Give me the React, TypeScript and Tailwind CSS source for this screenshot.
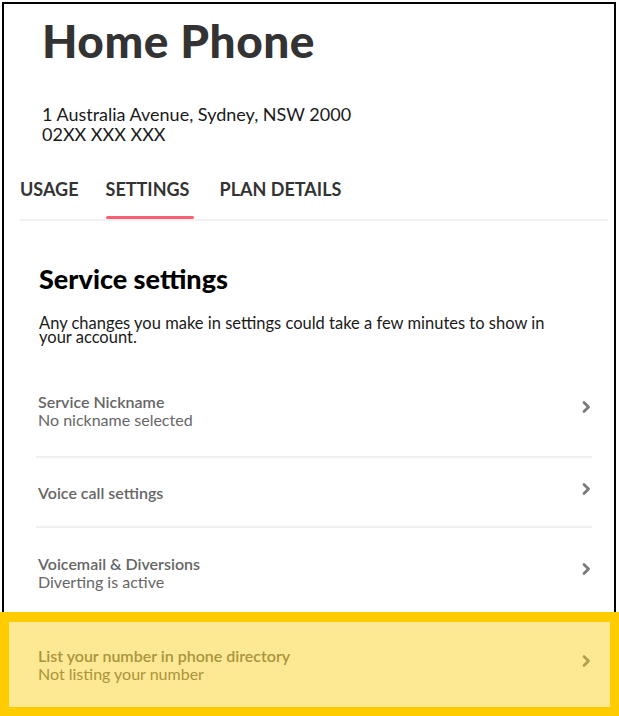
import React from 'react';

const font = { fontFamily: 'Lato, "Liberation Sans", sans-serif' };

const Chevron: React.FC = () => (
  <svg width="10" height="14" viewBox="0 0 10 14" className="mb-[8px] shrink-0">
    <path d="M3 2.5 L7.5 7 L3 11.5" fill="none" stroke="#7a7a7a" strokeWidth="2.8" strokeLinecap="round" strokeLinejoin="round" />
  </svg>
);

interface ItemProps {
  title: string;
  subtitle?: string;
  last?: boolean;
}

const SettingItem: React.FC<ItemProps> = ({ title, subtitle, last }) => (
  <div className={`flex items-center justify-between pl-[2px] pr-[1px] ${subtitle ? 'py-[27px]' : 'pt-[24px] pb-[22px]'} ${last ? '' : 'border-b-2 border-[#efefef]'}`}>
    <div className="text-[16px] leading-[18px] text-[#666666]">
      <div className="font-semibold">{title}</div>
      {subtitle && <div>{subtitle}</div>}
    </div>
    <Chevron />
  </div>
);

export default function App() {
  const tabs = ['USAGE', 'SETTINGS', 'PLAN DETAILS'];
  return (
    <div className="relative w-[619px] h-[716px] overflow-hidden bg-white pl-[2px] pt-[2px]" style={font}>
      <div className="w-[614px] min-h-[714px] border-2 border-b-0 border-black">
        <div className="pl-[38px]">
          <h1 className="mt-[14px] text-[46px] leading-[46px] font-black text-[#333333] tracking-[0.5px]">Home Phone</h1>
          <div className="mt-[40px] text-[18px] leading-[20px] text-[#1a1a1a]">
            <div>1 Australia Avenue, Sydney, NSW 2000</div>
            <div>02XX XXX XXX</div>
          </div>
        </div>

        <div className="mt-[35px] pl-[16px] flex gap-[23px]">
          {tabs.map((t) => (
            <div key={t} className={`flex flex-col ${t === 'PLAN DETAILS' ? 'ml-[3px]' : ''}`}>
              <span className="text-[18px] leading-[20px] font-bold text-[#333333] pr-[4px]">{t}</span>
              <div className={`mt-[17px] h-[3px] rounded-full ${t === 'SETTINGS' ? 'bg-[#ff5f73]' : 'bg-transparent'}`} />
            </div>
          ))}
        </div>
        <div className="ml-[16px] mr-[6px] h-[2px] bg-[#f1f1f1]" />

        <div className="pl-[35px] pr-[22px]">
          <h2 className="mt-[43px] text-[27px] leading-[30px] font-black text-black">Service settings</h2>
          <p className="mt-[23px] text-[16.5px] leading-[13.5px] text-[#1a1a1a] max-w-[512px]">
            Any changes you make in settings could take a few minutes to show in your account.
          </p>

          <div className="mt-[22px] -ml-[3px]">
            <SettingItem title="Service Nickname" subtitle="No nickname selected" />
            <SettingItem title="Voice call settings" />
            <SettingItem title="Voicemail & Diversions" subtitle="Diverting is active" />
            <SettingItem title="List your number in phone directory" subtitle="Not listing your number" last />
          </div>
        </div>
      </div>

      <div className="absolute left-0 top-[612px] w-[619px] h-[104px] border-[9px] border-t-[10px] border-[#ffcc00] bg-[#fbcb10]/45" />
    </div>
  );
}
